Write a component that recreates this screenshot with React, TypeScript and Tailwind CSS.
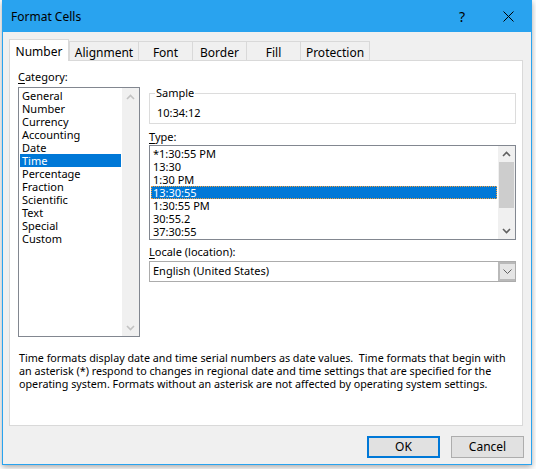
import React from 'react';

const categories = [
  'General',
  'Number',
  'Currency',
  'Accounting',
  'Date',
  'Time',
  'Percentage',
  'Fraction',
  'Scientific',
  'Text',
  'Special',
  'Custom',
];

const timeTypes = ['*1:30:55 PM', '13:30', '1:30 PM', '13:30:55', '1:30:55 PM', '30:55.2', '37:30:55'];

const tabs = [
  { label: 'Number', width: 'w-[60px]' },
  { label: 'Alignment', width: 'w-[70px]' },
  { label: 'Font', width: 'w-[55px]' },
  { label: 'Border', width: 'w-[55px]' },
  { label: 'Fill', width: 'w-[55px]' },
  { label: 'Protection', width: 'w-[70px]' },
];

const Chevron: React.FC<{ dir: 'up' | 'down'; className?: string }> = ({ dir, className }) => (
  <svg width="9" height="6" viewBox="0 0 9 6" className={className}>
    <polyline
      points={dir === 'up' ? '1,5 4.5,1.5 8,5' : '1,1 4.5,4.5 8,1'}
      fill="none"
      stroke="currentColor"
      strokeWidth="1.6"
    />
  </svg>
);

const Underlined: React.FC<{ first: string; rest: string }> = ({ first, rest }) => (
  <div className="h-[16px] leading-[16px]">
    <span className="underline underline-offset-2">{first}</span>
    {rest}
  </div>
);

export default function App() {
  return (
    <div className="w-[536px] h-[469px] bg-white font-['Noto_Sans',sans-serif] text-[11px] text-black">
      <div className="ml-[2px] w-[530px] h-[465px] flex flex-col border-x border-b border-[#29a3ef] shadow-[0_2px_6px_rgba(0,0,0,0.35)]">
        {/* title bar */}
        <div className="h-[32px] shrink-0 bg-[#29a3ef] flex items-center">
          <div className="pl-[8px] pt-[2px] flex-1 text-[12px]">Format Cells</div>
          <div className="w-[46px] h-full flex items-center justify-center text-[14px]">?</div>
          <div className="w-[46px] h-full flex items-center justify-center">
            <svg width="11" height="11" viewBox="0 0 11 11">
              <path d="M0.5 0.5 L10.5 10.5 M10.5 0.5 L0.5 10.5" stroke="#000" strokeWidth="1" />
            </svg>
          </div>
        </div>

        <div className="flex-1 bg-[#f0f0f0] px-[6px] pt-[7px]">
          {/* tab strip */}
          <div className="relative z-10 flex items-end h-[21px]">
            {tabs.map((t, i) =>
              i === 0 ? (
                <div
                  key={t.label}
                  className={`${t.width} h-[22px] -mb-px bg-white border border-b-0 border-[#d9d9d9] flex items-center justify-center pt-[3px] text-[12px]`}
                >
                  {t.label}
                </div>
              ) : (
                <div
                  key={t.label}
                  className={`${t.width} h-[19px] ${i > 1 ? '-ml-px' : ''} bg-[#f0f0f0] border border-b-0 border-[#d9d9d9] flex items-center justify-center pt-[3px] text-[12px]`}
                >
                  {t.label}
                </div>
              )
            )}
          </div>

          {/* tab page */}
          <div className="w-[514px] h-[366px] bg-white border border-[#d9d9d9] flex flex-col">
            <div className="flex pt-[8px] pl-[8px]">
              {/* category */}
              <div className="w-[122px]">
                <Underlined first="C" rest="ategory:" />
                <div className="mt-[2px] h-[250px] border border-[#828790] flex">
                  <div className="flex-1 p-px">
                    {categories.map((c) => (
                      <div
                        key={c}
                        className={`h-[13px] leading-[13px] pl-[2px] ${c === 'Time' ? 'bg-[#0078d7] text-white' : ''}`}
                      >
                        {c}
                      </div>
                    ))}
                  </div>
                  <div className="w-[17px] bg-[#f0f0f0] flex flex-col justify-between items-center text-[#c2c2c2]">
                    <div className="h-[17px] flex items-center justify-center">
                      <Chevron dir="up" />
                    </div>
                    <div className="h-[17px] flex items-center justify-center">
                      <Chevron dir="down" />
                    </div>
                  </div>
                </div>
              </div>

              {/* sample / type / locale */}
              <div className="ml-[9px] w-[367px]">
                <div className="relative mt-[24px] h-[31px] border border-[#dcdcdc] pl-[7px] pt-[11px] leading-[16px]">
                  <span className="absolute -top-[9px] left-[5px] px-px bg-white leading-[16px]">Sample</span>
                  10:34:12
                </div>

                <div className="mt-[5px]">
                  <Underlined first="T" rest="ype:" />
                </div>
                <div className="h-[95px] border border-[#828790] flex">
                  <div className="flex-1 p-px">
                    {timeTypes.map((t) => (
                      <div
                        key={t}
                        className={`h-[13px] leading-[13px] pl-[2px] ${
                          t === '13:30:55'
                            ? 'bg-[#0078d7] text-white outline outline-1 outline-dotted outline-[#f5a03c] -outline-offset-1'
                            : ''
                        }`}
                      >
                        {t}
                      </div>
                    ))}
                  </div>
                  <div className="w-[17px] bg-[#f0f0f0] flex flex-col text-[#606060]">
                    <div className="h-[16px] flex items-center justify-center">
                      <Chevron dir="up" />
                    </div>
                    <div className="mx-px h-[46px] bg-[#cdcdcd]" />
                    <div className="flex-1" />
                    <div className="h-[16px] flex items-center justify-center">
                      <Chevron dir="down" />
                    </div>
                  </div>
                </div>

                <div className="mt-[4px]">
                  <Underlined first="L" rest="ocale (location):" />
                </div>
                <div className="mt-px h-[21px] border border-[#acacac] flex items-center">
                  <div className="flex-1 pl-[3px]">English (United States)</div>
                  <div className="w-[17px] h-full bg-[#e5e5e5] border-2 border-r-0 border-[#b9b9b9] flex items-center justify-center text-[#606060]">
                    <svg width="9" height="5" viewBox="0 0 9 5">
                      <polyline points="0.5,0.5 4.5,4.5 8.5,0.5" fill="none" stroke="currentColor" strokeWidth="1" />
                    </svg>
                  </div>
                </div>
              </div>
            </div>

            <p className="mt-[15px] pl-[9px] text-[10.75px] leading-[13px] whitespace-nowrap">
              Time formats display date and time serial numbers as date values.{'\u00a0'} Time formats that begin with
              <br />
              an asterisk (*) respond to changes in regional date and time settings that are specified for the
              <br />
              operating system. Formats without an asterisk are not affected by operating system settings.
            </p>
          </div>

          {/* dialog buttons */}
          <div className="w-[515px] mt-[10px] flex justify-end gap-[11px]">
            <button className="w-[73px] h-[22px] bg-[#e1e1e1] border-2 border-[#0078d7] text-[12px]">OK</button>
            <button className="w-[73px] h-[22px] bg-[#e1e1e1] border border-[#adadad] text-[12px]">Cancel</button>
          </div>
        </div>
      </div>
    </div>
  );
}
